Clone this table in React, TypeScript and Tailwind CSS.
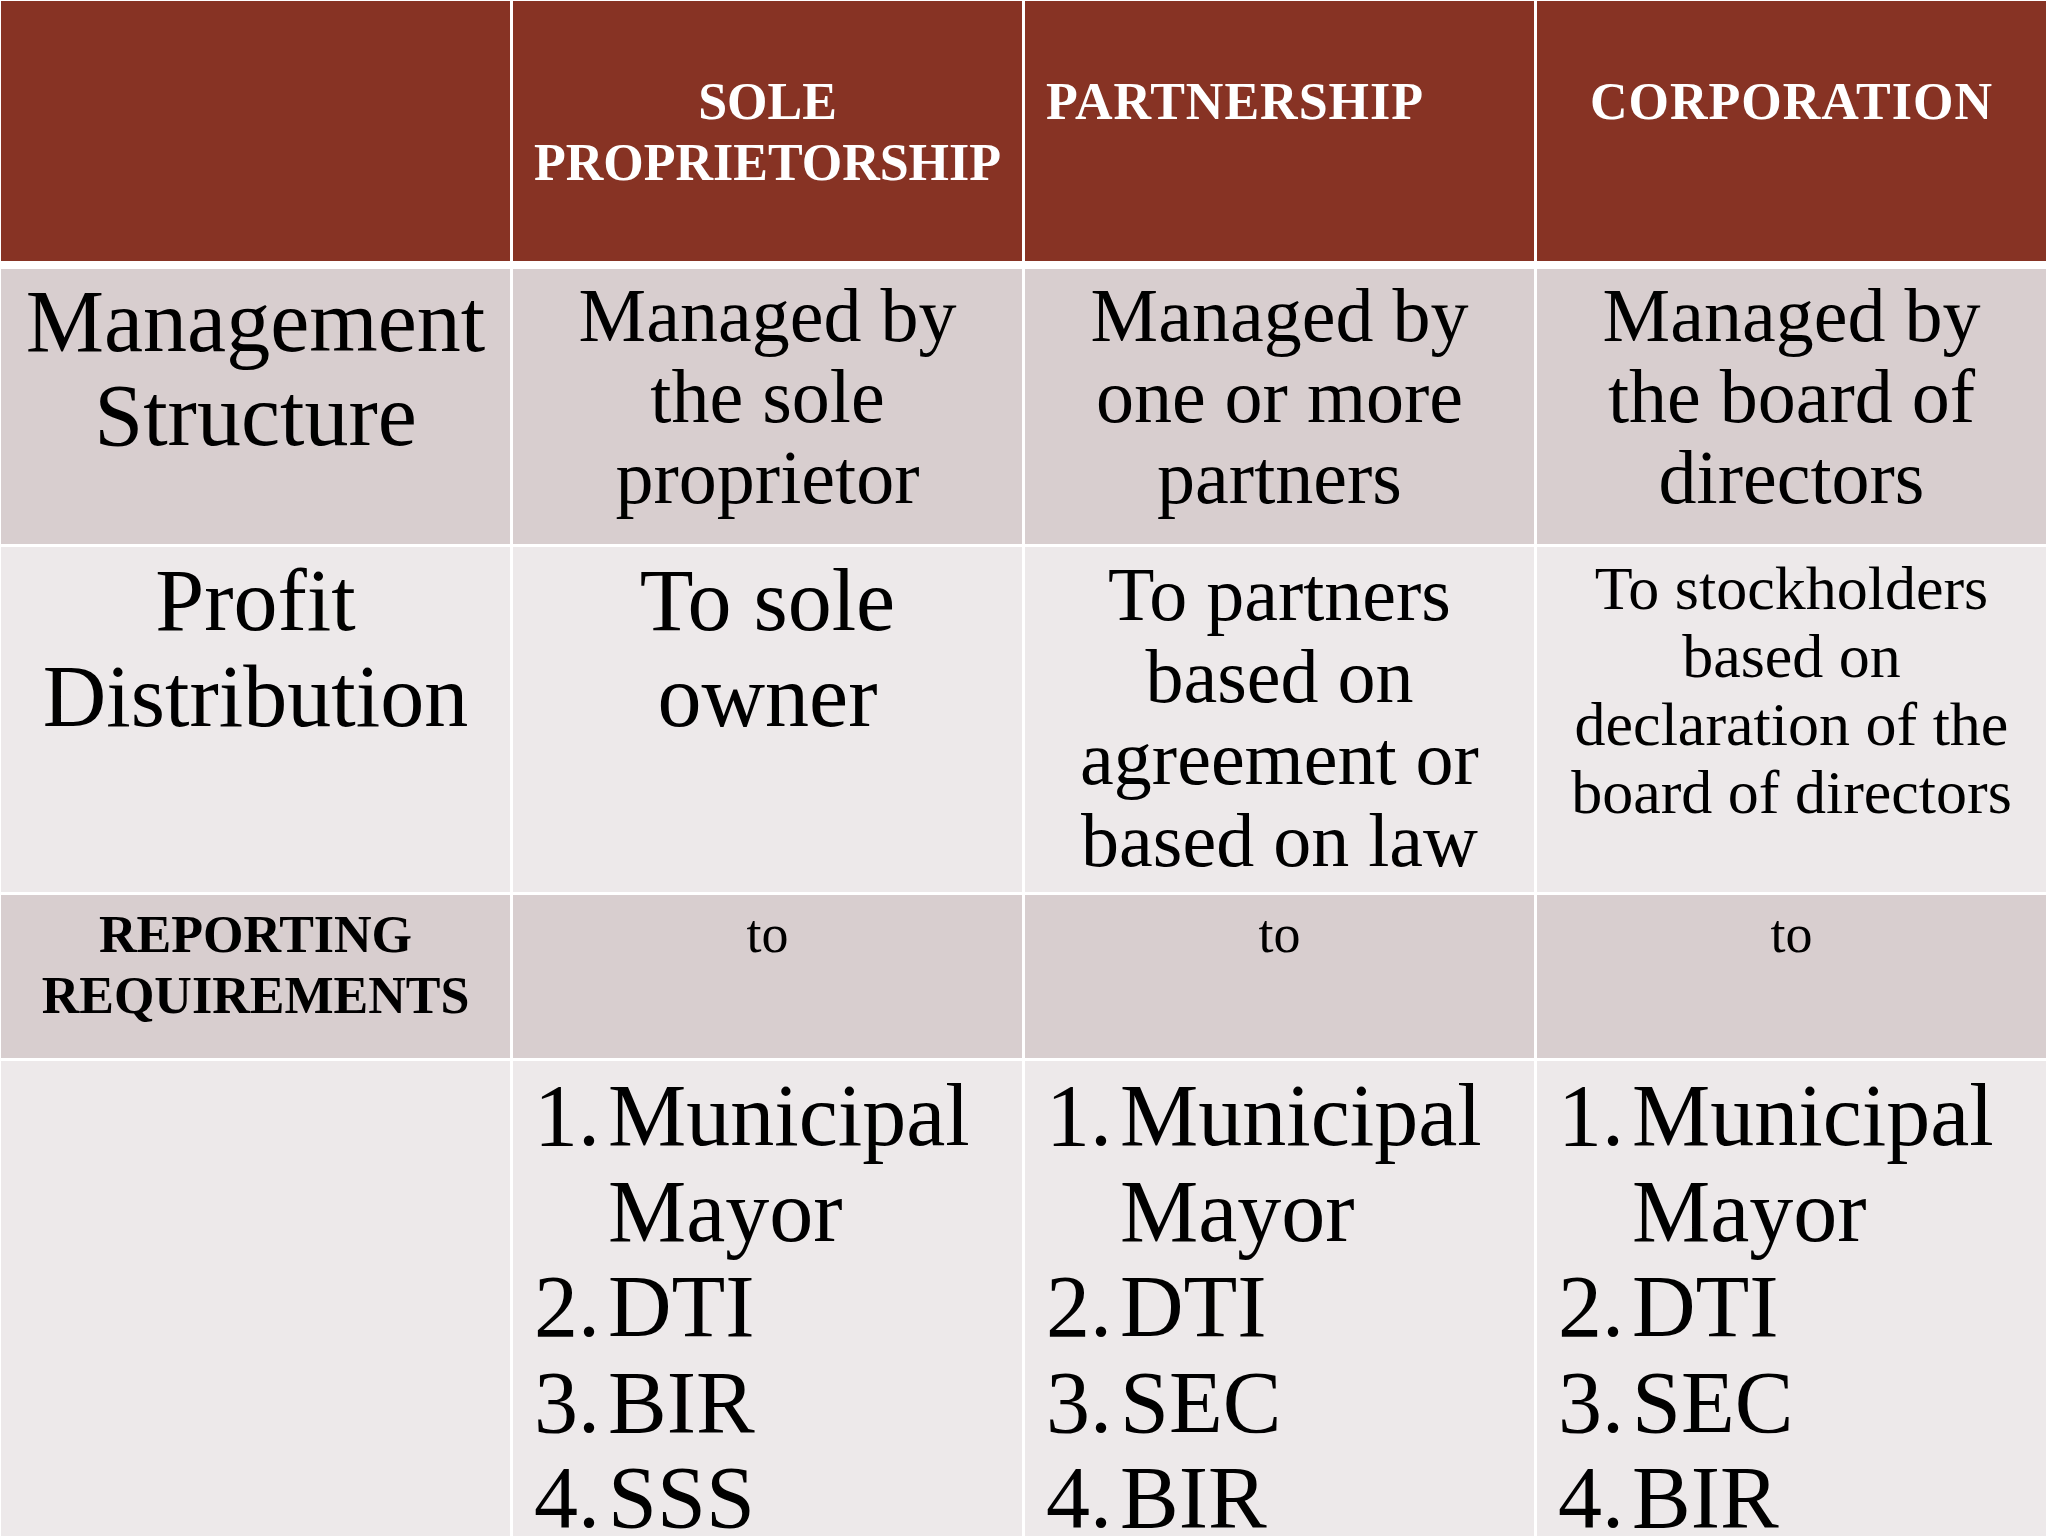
import React from "react";

const serif = { fontFamily: '"Liberation Serif", "Times New Roman", serif' };

function HeaderCell({
  children,
  align = "center",
  wide = false,
}: {
  children: React.ReactNode;
  align?: "center" | "left";
  wide?: boolean;
}) {
  return (
    <div
      className={`bg-[#873324] h-[260px] pt-[70px] text-white font-bold text-[52px] leading-[61px] whitespace-nowrap ${
        align === "left" ? "text-left pl-[21px]" : "text-center"
      } ${wide ? "tracking-[1px]" : ""}`}
    >
      {children}
    </div>
  );
}

function ListCell({ items }: { items: { n: string; lines: string[] }[] }) {
  return (
    <div className="bg-[#ede9ea] h-[475px] pt-[7px] pl-[21px] text-black text-[88px] leading-[95.5px] whitespace-nowrap overflow-hidden">
      {items.map((it) => (
        <div key={it.n} className="flex">
          <span className="w-[74px] shrink-0">{it.n}</span>
          <span>
            {it.lines.map((l, i) => (
              <div key={i}>{l}</div>
            ))}
          </span>
        </div>
      ))}
    </div>
  );
}

export default function App() {
  const muni = { n: "1.", lines: ["Municipal", "Mayor"] };
  return (
    <div className="w-[2048px] h-[1536px] overflow-hidden bg-white pt-[1px] pl-[1px] pr-[2px]" style={serif}>
      <div className="grid grid-cols-4 gap-x-[3px]">
        <HeaderCell>{""}</HeaderCell>
        <HeaderCell>
          SOLE
          <br />
          PROPRIETORSHIP
        </HeaderCell>
        <HeaderCell align="left" wide>
          PARTNERSHIP
        </HeaderCell>
        <HeaderCell wide>CORPORATION</HeaderCell>
      </div>

      <div className="grid grid-cols-4 gap-x-[3px] mt-[8px] text-black">
        <div className="bg-[#d8cecf] h-[275px] pt-[6px] text-center text-[88px] leading-[94px] whitespace-nowrap">
          Management
          <br />
          Structure
        </div>
        <div className="bg-[#d8cecf] h-[275px] pt-[6px] text-center text-[76px] leading-[81px] whitespace-nowrap">
          Managed by
          <br />
          the sole
          <br />
          proprietor
        </div>
        <div className="bg-[#d8cecf] h-[275px] pt-[6px] text-center text-[76px] leading-[81px] whitespace-nowrap">
          Managed by
          <br />
          one or more
          <br />
          partners
        </div>
        <div className="bg-[#d8cecf] h-[275px] pt-[6px] text-center text-[76px] leading-[81px] whitespace-nowrap">
          Managed by
          <br />
          the board of
          <br />
          directors
        </div>
      </div>

      <div className="grid grid-cols-4 gap-x-[3px] mt-[3px] text-black">
        <div className="bg-[#ede9ea] h-[345px] pt-[6px] text-center text-[88px] leading-[96px] whitespace-nowrap">
          Profit
          <br />
          Distribution
        </div>
        <div className="bg-[#ede9ea] h-[345px] pt-[6px] text-center text-[88px] leading-[96px] whitespace-nowrap">
          To sole
          <br />
          owner
        </div>
        <div className="bg-[#ede9ea] h-[345px] pt-[6px] text-center text-[76px] leading-[82px] whitespace-nowrap">
          To partners
          <br />
          based on
          <br />
          agreement or
          <br />
          based on law
        </div>
        <div className="bg-[#ede9ea] h-[345px] pt-[7px] text-center text-[62px] leading-[68px] whitespace-nowrap">
          To stockholders
          <br />
          based on
          <br />
          declaration of the
          <br />
          board of directors
        </div>
      </div>

      <div className="grid grid-cols-4 gap-x-[3px] mt-[3px] text-black">
        <div className="bg-[#d8cecf] h-[163px] pt-[9px] text-center font-bold text-[52px] leading-[61px] whitespace-nowrap">
          REPORTING
          <br />
          REQUIREMENTS
        </div>
        <div className="bg-[#d8cecf] h-[163px] pt-[9px] text-center text-[54px] leading-[61px]">to</div>
        <div className="bg-[#d8cecf] h-[163px] pt-[9px] text-center text-[54px] leading-[61px]">to</div>
        <div className="bg-[#d8cecf] h-[163px] pt-[9px] text-center text-[54px] leading-[61px]">to</div>
      </div>

      <div className="grid grid-cols-4 gap-x-[3px] mt-[3px]">
        <div className="bg-[#ede9ea] h-[475px]" />
        <ListCell
          items={[
            muni,
            { n: "2.", lines: ["DTI"] },
            { n: "3.", lines: ["BIR"] },
            { n: "4.", lines: ["SSS"] },
          ]}
        />
        <ListCell
          items={[
            muni,
            { n: "2.", lines: ["DTI"] },
            { n: "3.", lines: ["SEC"] },
            { n: "4.", lines: ["BIR"] },
          ]}
        />
        <ListCell
          items={[
            muni,
            { n: "2.", lines: ["DTI"] },
            { n: "3.", lines: ["SEC"] },
            { n: "4.", lines: ["BIR"] },
          ]}
        />
      </div>
    </div>
  );
}
